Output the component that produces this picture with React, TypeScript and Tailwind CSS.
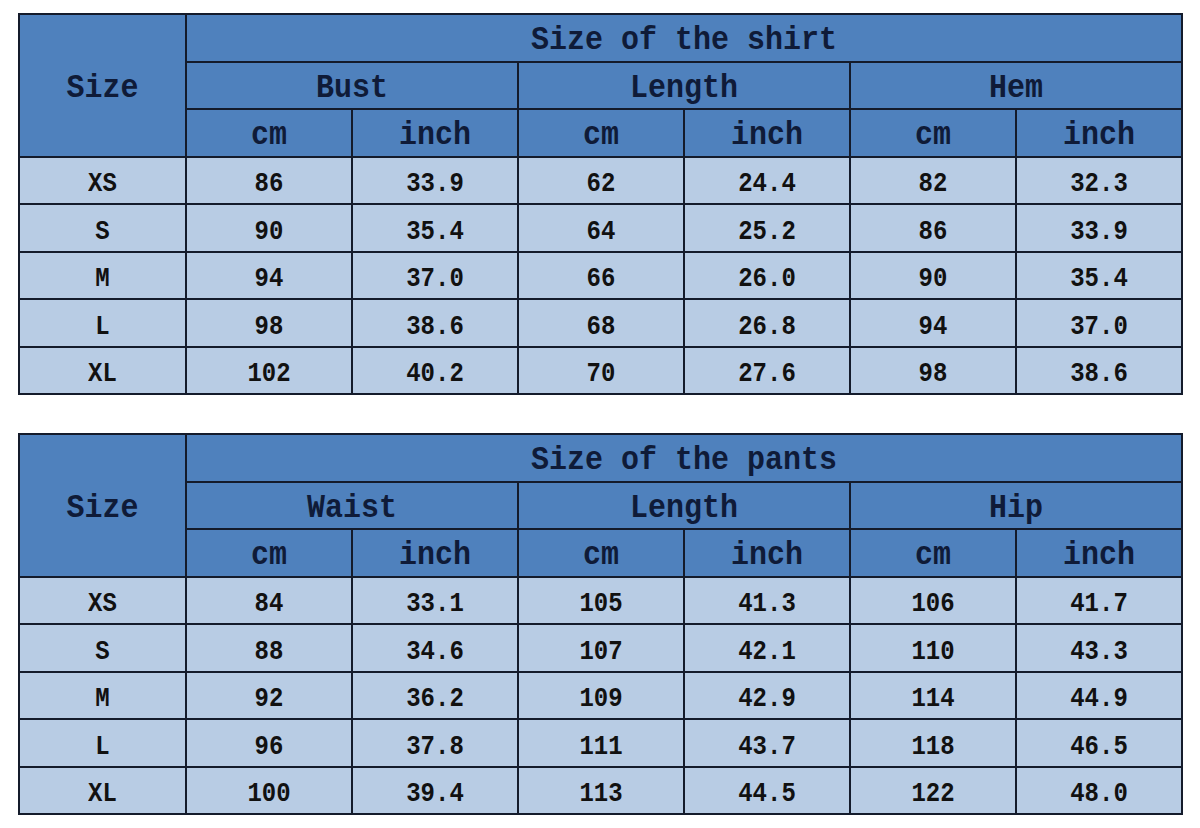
const shirt = [
  ['XS', '86', '33.9', '62', '24.4', '82', '32.3'],
  ['S', '90', '35.4', '64', '25.2', '86', '33.9'],
  ['M', '94', '37.0', '66', '26.0', '90', '35.4'],
  ['L', '98', '38.6', '68', '26.8', '94', '37.0'],
  ['XL', '102', '40.2', '70', '27.6', '98', '38.6'],
]

const pants = [
  ['XS', '84', '33.1', '105', '41.3', '106', '41.7'],
  ['S', '88', '34.6', '107', '42.1', '110', '43.3'],
  ['M', '92', '36.2', '109', '42.9', '114', '44.9'],
  ['L', '96', '37.8', '111', '43.7', '118', '46.5'],
  ['XL', '100', '39.4', '113', '44.5', '122', '48.0'],
]

// header cells: bigger navy text, data cells: smaller black digits (stretched a bit taller like the original font)
const head = 'bg-[#4f81bd] flex items-center justify-center pt-[6px] text-[30px] text-[#0f1b38]'
const cell = 'bg-[#b8cce4] flex items-center justify-center pt-[8px] text-[24px] text-[#111]'

function SizeTable({ title, groups, rows }: { title: string; groups: string[]; rows: string[][] }) {
  return (
    <div
      className="grid grid-cols-[165px_repeat(6,164px)] grid-rows-[repeat(8,45.5px)] gap-[2px] p-[2px] bg-[#141b2b] w-fit font-bold"
      style={{ fontFamily: '"Liberation Mono", "DejaVu Sans Mono", monospace' }}
    >
      <div className={`${head} row-span-3`}><span className="inline-block scale-y-110">Size</span></div>
      <div className={`${head} col-span-6`}><span className="inline-block scale-y-110">{title}</span></div>
      {groups.map((g) => (
        <div key={g} className={`${head} col-span-2`}><span className="inline-block scale-y-110">{g}</span></div>
      ))}
      {groups.map((g) => [
        <div key={g + 'cm'} className={head}><span className="inline-block scale-y-110">cm</span></div>,
        <div key={g + 'in'} className={head}><span className="inline-block scale-y-110">inch</span></div>,
      ])}
      {rows.map((r) =>
        r.map((v, i) => (
          <div key={r[0] + i} className={cell}>
            <span className="inline-block scale-y-[1.15]">{v}</span>
          </div>
        ))
      )}
    </div>
  )
}

export default function App() {
  return (
    <div className="w-[1200px] h-[828px] bg-white pt-[13px] pl-[18px] flex flex-col gap-[38px]">
      <SizeTable title="Size of the shirt" groups={['Bust', 'Length', 'Hem']} rows={shirt} />
      <SizeTable title="Size of the pants" groups={['Waist', 'Length', 'Hip']} rows={pants} />
    </div>
  )
}
